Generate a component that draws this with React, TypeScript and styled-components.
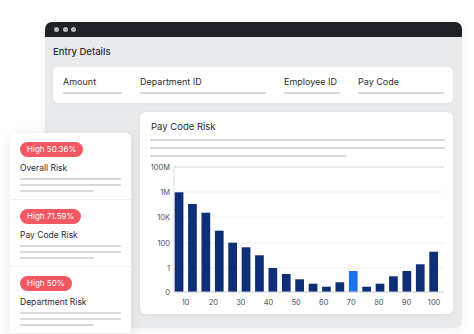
import React from "react";
import styled, { createGlobalStyle } from "styled-components";

const GlobalStyle = createGlobalStyle`
  html, body {
    margin: 0;
    padding: 0;
    background: #ffffff;
    font-family: Inter, "Liberation Sans", sans-serif;
    color: #2b2d31;
  }
`;

const Page = styled.div`
  position: relative;
  width: 474px;
  height: 334px;
  overflow: hidden;
  background: #ffffff;
`;

const Window = styled.div`
  position: absolute;
  left: 45px;
  top: 22px;
  width: 417px;
  height: 306px;
  border-radius: 7px;
  overflow: hidden;
  background: #e9eaec;
  box-shadow: 0 2px 10px rgba(0, 0, 0, 0.06);
  display: flex;
  flex-direction: column;
`;

const TitleBar = styled.div`
  height: 15px;
  background: #1f2226;
  display: flex;
  align-items: center;
  gap: 3.5px;
  padding-left: 9px;
`;

const Dot = styled.span`
  width: 5px;
  height: 5px;
  border-radius: 50%;
  background: #b9bbbe;
`;

const Body = styled.div`
  flex: 1;
  padding: 8px 9px 14px 8px;
  display: flex;
  flex-direction: column;
`;

const SectionTitle = styled.div`
  font-size: 9.5px;
  font-weight: 500;
  line-height: 14px;
  margin-bottom: 8px;
  color: #2b2d31;
`;

const FieldsCard = styled.div`
  background: #ffffff;
  border-radius: 5px;
  padding: 9px 9px 9px 10px;
  display: flex;
  gap: 18px;
  box-shadow: 0 1px 3px rgba(0, 0, 0, 0.04);
`;

const Field = styled.div<{ $w: number }>`
  width: ${(p) => p.$w}px;
  display: flex;
  flex-direction: column;
  gap: 4px;
`;

const FieldLabel = styled.div`
  font-size: 9px;
  line-height: 12px;
  color: #2e3034;
  white-space: nowrap;
`;

const Line = styled.div<{ $w?: number }>`
  height: 2px;
  border-radius: 1px;
  background: #d7d8da;
  width: ${(p) => (p.$w ? `${p.$w}px` : "100%")};
`;

const ChartCard = styled.div`
  margin-top: 9px;
  margin-left: 87px;
  height: 202px;
  box-sizing: border-box;
  background: #ffffff;
  border-radius: 6px;
  padding: 8px 8px 4px 10px;
  display: flex;
  flex-direction: column;
  box-shadow: 0 2px 6px rgba(0, 0, 0, 0.05);
`;

const ChartTitle = styled.div`
  font-size: 9.5px;
  line-height: 14px;
  padding-left: 1px;
  color: #2b2d31;
  margin-bottom: 5px;
`;

const LineStack = styled.div`
  display: flex;
  flex-direction: column;
  gap: 6px;
  margin-bottom: 3px;
`;

const RiskCard = styled.div`
  position: absolute;
  left: 10px;
  top: 133px;
  width: 121px;
  height: 220px;
  background: #ffffff;
  border-radius: 6px;
  box-shadow: 0 3px 14px rgba(0, 0, 0, 0.09);
  display: flex;
  flex-direction: column;
`;

const RiskSection = styled.div`
  height: 67px;
  box-sizing: border-box;
  padding: 9px 10px 0 10px;
  border-bottom: 1px solid #f0f0f1;
  display: flex;
  flex-direction: column;
  align-items: flex-start;
`;

const Badge = styled.span`
  height: 15px;
  line-height: 15px;
  padding: 0 7px;
  border-radius: 8px;
  background: #f25862;
  color: #ffffff;
  font-size: 8px;
  white-space: nowrap;
`;

const RiskName = styled.div`
  margin-top: 5px;
  font-size: 8.5px;
  line-height: 12px;
  color: #2b2d31;
  margin-bottom: 4px;
`;

const RiskLines = styled.div`
  align-self: stretch;
  display: flex;
  flex-direction: column;
  gap: 4px;
`;

const fields = [
  { label: "Amount", w: 59 },
  { label: "Department ID", w: 126 },
  { label: "Employee ID", w: 56 },
  { label: "Pay Code", w: 86 },
];

const risks = [
  { badge: "High 50.36%", name: "Overall Risk" },
  { badge: "High 71.59%", name: "Pay Code Risk" },
  { badge: "High 50%", name: "Department Risk" },
];

const barHeights = [
  99.7, 88, 79.3, 61.3, 49.3, 44.7, 36.7, 24, 18, 12.7, 8.3, 5.3, 9.7, 21, 5.3,
  8.3, 15.7, 21, 27.7, 40.3,
];

const yTicks = [
  { label: "100M", y: 7 },
  { label: "1M", y: 32 },
  { label: "10K", y: 57 },
  { label: "100", y: 83 },
  { label: "1", y: 108 },
  { label: "0", y: 132 },
];

const xTicks = [10, 20, 30, 40, 50, 60, 70, 80, 90, 100];

const Chart = () => {
  const base = 132;
  return (
    <svg width="295" height="150" viewBox="0 0 295 150">
      {yTicks.slice(1, 5).map((t) => (
        <line key={t.label} x1="24" x2="294" y1={t.y} y2={t.y} stroke="#f1f1f3" strokeWidth="1" />
      ))}
      <line x1="24" x2="294" y1="7" y2="7" stroke="#d4d5d8" strokeWidth="1" />
      <line x1="24" x2="24" y1="7" y2={base} stroke="#dcdde0" strokeWidth="1" />
      {barHeights.map((h, i) => (
        <rect
          key={i}
          x={24.7 + 13.4 * i}
          y={base - h}
          width="8.7"
          height={h}
          fill={i === 13 ? "#1b74e6" : "#0e2e78"}
        />
      ))}
      <line x1="24" x2="294" y1={base} y2={base} stroke="#c9cacd" strokeWidth="1" />
      {yTicks.map((t) => (
        <text
          key={t.label}
          x="20"
          y={t.y}
          textAnchor="end"
          dominantBaseline="central"
          fontSize="7.5"
          fill="#50535a"
          fontFamily="Inter, 'Liberation Sans', sans-serif"
        >
          {t.label}
        </text>
      ))}
      {xTicks.map((t, k) => (
        <text
          key={t}
          x={35.7 + 27.6 * k}
          y="142"
          textAnchor="middle"
          dominantBaseline="central"
          fontSize="7.5"
          fill="#50535a"
          fontFamily="Inter, 'Liberation Sans', sans-serif"
        >
          {t}
        </text>
      ))}
    </svg>
  );
};

export default function App() {
  return (
    <Page>
      <GlobalStyle />
      <Window>
        <TitleBar>
          <Dot />
          <Dot />
          <Dot />
        </TitleBar>
        <Body>
          <SectionTitle>Entry Details</SectionTitle>
          <FieldsCard>
            {fields.map((f) => (
              <Field key={f.label} $w={f.w}>
                <FieldLabel>{f.label}</FieldLabel>
                <Line />
              </Field>
            ))}
          </FieldsCard>
          <ChartCard>
            <ChartTitle>Pay Code Risk</ChartTitle>
            <LineStack>
              <Line />
              <Line />
              <Line $w={197} />
            </LineStack>
            <Chart />
          </ChartCard>
        </Body>
      </Window>
      <RiskCard>
        {risks.map((r) => (
          <RiskSection key={r.name}>
            <Badge>{r.badge}</Badge>
            <RiskName>{r.name}</RiskName>
            <RiskLines>
              <Line />
              <Line />
              <Line $w={74} />
            </RiskLines>
          </RiskSection>
        ))}
      </RiskCard>
    </Page>
  );
}
